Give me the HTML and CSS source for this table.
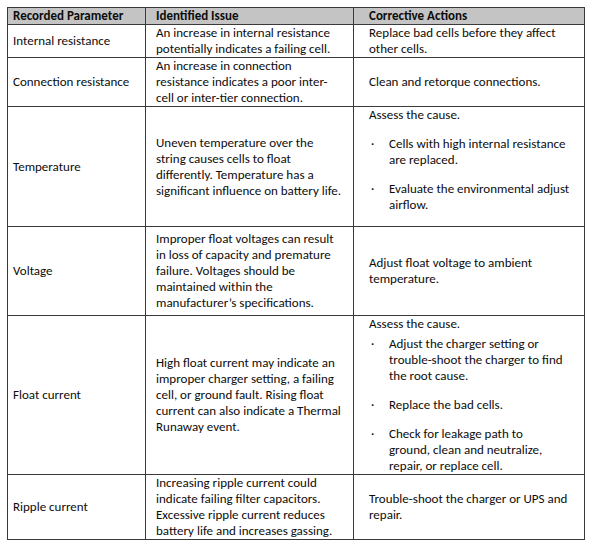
FILE: index.html
```html
<!DOCTYPE html>
<html>
<head>
<meta charset="utf-8">
<link rel="stylesheet" href="styles.css">
</head>
<body>
<table class="grid">
  <colgroup>
    <col class="c1"><col class="c2"><col class="c3">
  </colgroup>
  <thead>
    <tr class="r-head">
      <th class="p1">Recorded Parameter</th>
      <th class="p2">Identified Issue</th>
      <th class="p3">Corrective Actions</th>
    </tr>
  </thead>
  <tbody>
    <tr class="r1">
      <td class="p1">Internal resistance</td>
      <td class="p2">An increase in internal resistance<br>potentially indicates a failing cell.</td>
      <td class="p3">Replace bad cells before they affect<br>other cells.</td>
    </tr>
    <tr class="r2">
      <td class="p1">Connection resistance</td>
      <td class="p2">An increase in connection<br>resistance indicates a poor inter-<br>cell or inter-tier connection.</td>
      <td class="p3">Clean and retorque connections.</td>
    </tr>
    <tr class="r3">
      <td class="p1">Temperature</td>
      <td class="p2">Uneven temperature over the<br>string causes cells to float<br>differently. Temperature has a<br>significant influence on battery life.</td>
      <td class="p3 top">
        <div class="lead">Assess the cause.</div>
        <ul class="bullets wide">
          <li><span class="dot">·</span><span>Cells with high internal resistance<br>are replaced.</span></li>
          <li><span class="dot">·</span><span>Evaluate the environmental adjust<br>airflow.</span></li>
        </ul>
      </td>
    </tr>
    <tr class="r4">
      <td class="p1">Voltage</td>
      <td class="p2">Improper float voltages can result<br>in loss of capacity and premature<br>failure. Voltages should be<br>maintained within the<br>manufacturer’s specifications.</td>
      <td class="p3">Adjust float voltage to ambient<br>temperature.</td>
    </tr>
    <tr class="r5">
      <td class="p1">Float current</td>
      <td class="p2">High float current may indicate an<br>improper charger setting, a failing<br>cell, or ground fault. Rising float<br>current can also indicate a Thermal<br>Runaway event.</td>
      <td class="p3 top">
        <div class="lead">Assess the cause.</div>
        <ul class="bullets">
          <li class="first"><span class="dot">·</span><span>Adjust the charger setting or<br>trouble-shoot the charger to find<br>the root cause.</span></li>
          <li><span class="dot">·</span><span>Replace the bad cells.</span></li>
          <li><span class="dot">·</span><span>Check for leakage path to<br>ground, clean and neutralize,<br>repair, or replace cell.</span></li>
        </ul>
      </td>
    </tr>
    <tr class="r6">
      <td class="p1">Ripple current</td>
      <td class="p2">Increasing ripple current could<br>indicate failing filter capacitors.<br>Excessive ripple current reduces<br>battery life and increases gassing.</td>
      <td class="p3">Trouble-shoot the charger or UPS and<br>repair.</td>
    </tr>
  </tbody>
</table>
</body>
</html>
```

FILE: styles.css
```css
html, body {
  margin: 0;
  padding: 0;
  background: #ffffff;
}

body {
  padding: 7px 0 0 7px;
  font-family: "Carlito", "Lato", "Liberation Sans", sans-serif;
  font-size: 13px;
  line-height: 16px;
  color: #0d0d0d;
}

.grid {
  border-collapse: collapse;
  width: 577px;
  table-layout: fixed;
}

.c1 { width: 138px; }
.c2 { width: 208px; }
.c3 { width: 231px; }

.grid th,
.grid td {
  border: 1px solid #3a3a3a;
  padding: 0;
  vertical-align: middle;
  text-align: left;
  white-space: nowrap;
}

.grid th {
  background: #c4c4c4;
  font-weight: bold;
}

.p1 { padding-left: 5px !important; }
.p2 { padding-left: 10px !important; }
.p3 { padding-left: 15px !important; }

.top { vertical-align: top !important; }

.r-head { height: 16px; }
.r1 { height: 33px; }
.r2 { height: 49px; }
.r3 { height: 120px; }
.r4 { height: 89px; }
.r5 { height: 157px; }
.r6 { height: 64px; }

.lead {
  padding-top: 0;
}

.bullets {
  list-style: none;
  margin: 0;
  padding: 0;
}

.bullets li {
  display: flex;
  margin-top: 13px;
}

.bullets.wide li {
  margin-top: 13px;
}

.bullets li.first {
  margin-top: 4px;
}

.dot {
  width: 18px;
  padding-left: 2px;
  flex: none;
}
```
